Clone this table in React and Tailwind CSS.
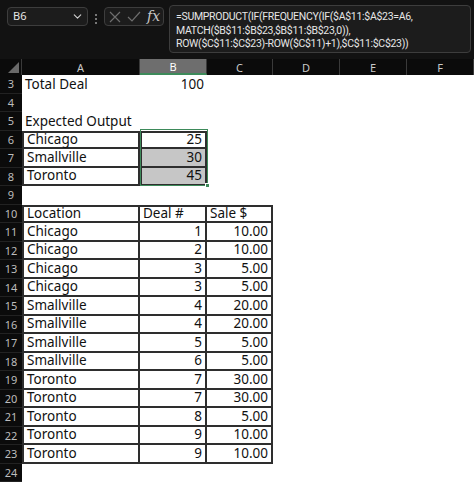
import React from "react";
import { ChevronDown } from "lucide-react";

const COLS = ["A", "B", "C", "D", "E", "F"];

const data = [
  ["Chicago", 1, "10.00"],
  ["Chicago", 2, "10.00"],
  ["Chicago", 3, "5.00"],
  ["Chicago", 3, "5.00"],
  ["Smallville", 4, "20.00"],
  ["Smallville", 4, "20.00"],
  ["Smallville", 5, "5.00"],
  ["Smallville", 6, "5.00"],
  ["Toronto", 7, "30.00"],
  ["Toronto", 7, "30.00"],
  ["Toronto", 8, "5.00"],
  ["Toronto", 9, "10.00"],
  ["Toronto", 9, "10.00"],
];

const expected = [
  ["Chicago", "25", false],
  ["Smallville", "30", true],
  ["Toronto", "45", true],
];

const rowCls = "grid grid-cols-[22px_118px_67px_66px_67px_67px_67px] h-[18.5px]";

const RowNum = ({ n }) => (
  <div className="bg-[#0b0b0b] text-[#bdbdbd] text-[11px] leading-none flex items-center justify-center border-b border-[#222]">
    {n}
  </div>
);

const Cell = ({ children, className = "" }) => (
  <div className={"flex items-center px-[3px] leading-none whitespace-nowrap overflow-visible " + className}>{children}</div>
);

export default function App() {
  const rows = [];

  rows.push(
    <div key="3" className={rowCls}>
      <RowNum n={3} />
      <Cell>Total Deal</Cell>
      <Cell className="justify-end">100</Cell>
    </div>
  );
  rows.push(
    <div key="4" className={rowCls}>
      <RowNum n={4} />
    </div>
  );
  rows.push(
    <div key="5" className={rowCls}>
      <RowNum n={5} />
      <Cell>Expected Output</Cell>
    </div>
  );

  expected.forEach(([loc, val, gray], i) =>
    rows.push(
      <div key={"e" + i} className={rowCls}>
        <RowNum n={6 + i} />
        <Cell className={"border-x-2 border-b-2 border-[#2e2e2e] " + (i === 0 ? "border-t-2" : "")}>{loc}</Cell>
        <Cell
          className={
            "justify-end border-x-2 border-b-2 border-[#2e2e2e] " +
            (i === 0 ? "border-t-2 " : "") +
            (gray ? "bg-[#c6c6c6]" : "bg-white")
          }
        >
          {val}
        </Cell>
      </div>
    )
  );

  rows.push(
    <div key="9" className={rowCls}>
      <RowNum n={9} />
    </div>
  );

  const tb = "border-r-2 border-b-2 border-[#2e2e2e]";
  rows.push(
    <div key="10" className={rowCls}>
      <RowNum n={10} />
      <Cell className={tb + " border-t-2 border-l-2"}>Location</Cell>
      <Cell className={tb + " border-t-2"}>Deal #</Cell>
      <Cell className={tb + " border-t-2"}>Sale $</Cell>
    </div>
  );

  data.forEach(([loc, deal, sale], i) =>
    rows.push(
      <div key={"d" + i} className={rowCls}>
        <RowNum n={11 + i} />
        <Cell className={tb + " border-l-2"}>{loc}</Cell>
        <Cell className={tb + " justify-end"}>{deal}</Cell>
        <Cell className={tb + " justify-end"}>{sale}</Cell>
      </div>
    )
  );

  rows.push(
    <div key="24" className={rowCls}>
      <RowNum n={24} />
    </div>
  );

  return (
    <div className="w-[474px] h-[483px] overflow-hidden bg-white font-['Noto_Sans',sans-serif]">
      {/* formula bar */}
      <div className="h-[59px] bg-[#121212] flex items-start pt-[5px] pl-[7px]">
        <div className="mt-[2px] w-[81px] h-[19px] rounded-[4px] border border-[#3d3d3d] bg-[#1c1c1c] flex items-center justify-between pl-[5px] pr-[3px] text-[11px] text-[#e6e6e6]">
          <span>B6</span>
          <ChevronDown size={13} strokeWidth={2} color="#d0d0d0" />
        </div>
        <div className="mt-[9px] ml-[7px] flex flex-col gap-[2px]">
          <span className="w-[2px] h-[2px] bg-[#9a9a9a] rounded-full" />
          <span className="w-[2px] h-[2px] bg-[#9a9a9a] rounded-full" />
          <span className="w-[2px] h-[2px] bg-[#9a9a9a] rounded-full" />
        </div>
        <div className="mt-[2px] ml-[7px] w-[60px] h-[19px] rounded-[4px] border border-[#3d3d3d] bg-[#1c1c1c] flex items-center pl-[4px] gap-[6px]">
          <svg width="12" height="12" viewBox="0 0 12 12">
            <path d="M1 1L11 11M11 1L1 11" stroke="#6e6e6e" strokeWidth="1.2" fill="none" />
          </svg>
          <svg width="14" height="12" viewBox="0 0 14 12">
            <path d="M1 6L5 10L13 1" stroke="#6e6e6e" strokeWidth="1.2" fill="none" />
          </svg>
          <span className="text-[14px] italic text-[#c8c8c8] font-['DejaVu_Serif',serif] leading-none -mt-[2px]">fx</span>
        </div>
        <div className="ml-[5px] w-[302px] h-[48px] rounded-[4px] border border-[#3d3d3d] bg-[#1c1c1c] px-[6px] pt-[4px] text-[10.5px] leading-[13.5px] tracking-[-0.3px] text-[#e6e6e6] font-['Roboto',sans-serif]">
          <div>=SUMPRODUCT(IF(FREQUENCY(IF($A$11:$A$23=A6,</div>
          <div>MATCH($B$11:$B$23,$B$11:$B$23,0)),</div>
          <div>ROW($C$11:$C$23)-ROW($C$11)+1),$C$11:$C$23))</div>
        </div>
      </div>

      {/* column headers */}
      <div className="grid grid-cols-[22px_118px_67px_66px_67px_67px_67px] h-[16px] bg-[#0b0b0b] text-[11px] text-[#c8c8c8] leading-none">
        <div className="relative border-r border-[#3a3a3a]">
          <div className="absolute right-[2px] bottom-[2px] w-0 h-0 border-l-[11px] border-l-transparent border-b-[11px] border-b-[#6a6a6a]" />
        </div>
        {COLS.map((c) => (
          <div
            key={c}
            className={
              "flex items-center justify-center border-r border-[#3a3a3a] " +
              (c === "B" ? "bg-[#6e6e6e] text-white border-b-2 border-b-[#3d8a5a]" : "")
            }
          >
            {c}
          </div>
        ))}
      </div>

      {/* sheet */}
      <div className="relative text-[13.5px] text-[#111]">
        {rows}
        {/* selection B6:B8 */}
        <div className="absolute left-[140px] top-[54px] w-[68px] h-[57px] border-[1.5px] border-[#3d8a5a] pointer-events-none">
          <div className="absolute -right-[3px] -bottom-[3px] w-[5px] h-[5px] bg-[#3d8a5a] border border-white" />
        </div>
      </div>
    </div>
  );
}
